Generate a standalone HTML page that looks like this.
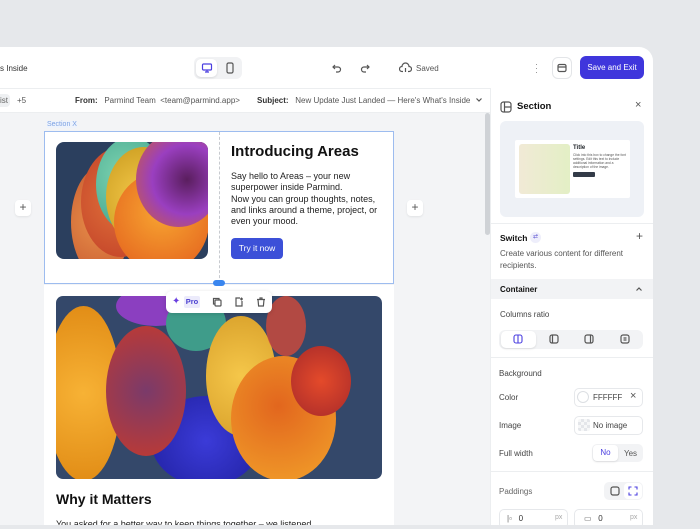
<!DOCTYPE html>
<html><head><style>
*{box-sizing:border-box;margin:0;padding:0}
body{width:700px;height:525px;overflow:hidden;background:#e6e8eb;font-family:"Liberation Sans",sans-serif;position:relative;color:#1f2328}
.a{position:absolute}
.t{font-size:8px;color:#333}
.ic{stroke:#555;fill:none;stroke-width:1.2}
</style></head><body>
<div class="a" style="left:0;top:47px;width:653px;height:478px;background:#fff;border-top-right-radius:14px;overflow:hidden">
 <div class="a t" style="left:0;top:17px;font-size:8px">s Inside</div>
 <div class="a" style="left:194px;top:10px;width:48px;height:22px;background:#f1f2f4;border-radius:6px"></div>
 <div class="a" style="left:196px;top:12px;width:21px;height:18px;background:#fff;border-radius:5px;box-shadow:0 1px 2px rgba(0,0,0,.1)"></div>
 <svg class="a" style="left:201px;top:15px" width="12" height="12" viewBox="0 0 12 12"><rect x="1.5" y="2" width="9" height="6" rx="1" fill="none" stroke="#4b3fe0" stroke-width="1.2"/><path d="M6 8v2M4 10h4" stroke="#4b3fe0" stroke-width="1.2"/></svg>
 <svg class="a" style="left:225px;top:15px" width="10" height="12" viewBox="0 0 10 12"><rect x="2" y="1" width="6" height="10" rx="1.5" class="ic"/></svg>
 <svg class="a" style="left:332px;top:16px" width="10" height="10" viewBox="0 0 10 10"><path d="M3 2L1 4l2 2M1 4h5a2.5 2.5 0 010 5H4" class="ic"/></svg>
 <svg class="a" style="left:360px;top:16px" width="10" height="10" viewBox="0 0 10 10"><path d="M7 2l2 2-2 2M9 4H4a2.5 2.5 0 000 5h2" class="ic"/></svg>
 <svg class="a" style="left:399px;top:15px" width="13" height="12" viewBox="0 0 13 12"><path d="M4 9.5H3a2.5 2.5 0 010-5 3.5 3.5 0 017 0 2.5 2.5 0 010 5H9M6.5 6v4" class="ic"/></svg>
 <div class="a t" style="left:416px;top:17px;color:#555">Saved</div>
 <div class="a" style="left:535px;top:15px;font-size:9px;color:#888;line-height:4px">·<br>·<br>·</div>
 <div class="a" style="left:552px;top:10px;width:20px;height:22px;border:1px solid #e3e5e8;border-radius:6px"></div>
 <svg class="a" style="left:557px;top:16px" width="10" height="10" viewBox="0 0 10 10"><rect x="1" y="1.5" width="8" height="7" rx="1.5" class="ic"/><path d="M1 4h8" class="ic"/></svg>
 <div class="a" style="left:580px;top:9px;width:64px;height:23px;background:#3f36dc;border-radius:6px;color:#fff;font-size:8px;text-align:center;line-height:23px">Save and Exit</div>
 <div class="a" style="left:0;top:41px;width:653px;height:1px;background:#eceef0"></div>
 <div class="a" style="left:0;top:47px;width:10px;height:13px;background:#eef0f2;border-radius:0 4px 4px 0;font-size:8px;color:#666;line-height:13px">ist</div>
 <div class="a t" style="left:17px;top:49px;color:#555">+5</div>
 <div class="a t" style="left:75px;top:49px"><b>From:</b>&nbsp;&nbsp; <span style="color:#555">Parmind Team &nbsp;&lt;team@parmind.app&gt;</span></div>
 <div class="a t" style="left:257px;top:49px"><b>Subject:</b>&nbsp;&nbsp; <span style="color:#555">New Update Just Landed — Here's What's Inside</span></div>
 <svg class="a" style="left:475px;top:50px" width="8" height="6" viewBox="0 0 8 6"><path d="M1.5 1.5L4 4l2.5-2.5" class="ic"/></svg>
 <div class="a" style="left:0;top:65px;width:490px;height:413px;background:#f3f4f6;border-top:1px solid #eceef0"></div>
 <div class="a" style="left:485px;top:66px;width:5px;height:122px;background:#cfd2d6;border-radius:3px"></div>
 <div class="a" style="left:47px;top:74px;font-size:7px;color:#7da2e3;background:#eef3fc">Section X</div>
 <div class="a" style="left:44px;top:84px;width:350px;height:153px;background:#fff;border:1px solid #9dbcef"></div>
 <div class="a" style="left:56px;top:95px;width:152px;height:117px;border-radius:8px;overflow:hidden;background:#2b3f5e">
  <div class="a" style="left:15px;top:25px;width:60px;height:110px;border-radius:50%;background:radial-gradient(circle,#e8904a,#c85a30)"></div>
  <div class="a" style="left:25px;top:5px;width:80px;height:110px;border-radius:50%;background:radial-gradient(circle,#e0713a,#c24128)"></div>
  <div class="a" style="left:40px;top:-5px;width:70px;height:95px;border-radius:50%;background:radial-gradient(circle at 40% 40%,#7dd3b0,#3b9f8a)"></div>
  <div class="a" style="left:50px;top:5px;width:75px;height:100px;border-radius:50%;background:radial-gradient(circle,#f5c94a,#c89a1e)"></div>
  <div class="a" style="left:58px;top:30px;width:95px;height:100px;border-radius:50%;background:radial-gradient(circle at 50% 40%,#f7a531,#e25c1c)"></div>
  <div class="a" style="left:80px;top:-10px;width:85px;height:95px;border-radius:50%;background:radial-gradient(circle at 60% 50%,#5a1e5e,#9a3fc0 50%,#d0622e)"></div>
 </div>
 <div class="a" style="left:219px;top:85px;height:151px;border-left:1px dashed #c7cacf"></div>
 <div class="a" style="left:231px;top:96px;font-size:15px;font-weight:bold;color:#111">Introducing Areas</div>
 <div class="a" style="left:231px;top:124px;font-size:9px;line-height:11.3px;color:#222;width:160px">Say hello to Areas – your new superpower inside Parmind.<br>Now you can group thoughts, notes, and links around a theme, project, or even your mood.</div>
 <div class="a" style="left:231px;top:191px;width:52px;height:21px;background:#3c50d8;border-radius:4px;color:#fff;font-size:8.5px;text-align:center;line-height:21px">Try it now</div>
 <div class="a" style="left:15px;top:153px;width:16px;height:16px;background:#fff;border-radius:4px;box-shadow:0 1px 2px rgba(0,0,0,.08);text-align:center;font-size:12px;line-height:15px;color:#555">+</div>
 <div class="a" style="left:407px;top:153px;width:16px;height:16px;background:#fff;border-radius:4px;box-shadow:0 1px 2px rgba(0,0,0,.08);text-align:center;font-size:12px;line-height:15px;color:#555">+</div>
 <div class="a" style="left:44px;top:238px;width:350px;height:240px;background:#fff"></div>
 <div class="a" style="left:56px;top:249px;width:326px;height:183px;border-radius:7px;overflow:hidden;background:#34486a">
  <div class="a" style="left:-10px;top:10px;width:75px;height:175px;border-radius:50%;background:radial-gradient(circle,#f7b235,#e08a14)"></div>
  <div class="a" style="left:60px;top:-10px;width:80px;height:40px;border-radius:50%;background:#8b3fc0"></div>
  <div class="a" style="left:95px;top:100px;width:110px;height:90px;border-radius:50%;background:radial-gradient(circle,#3b3bd8,#2020a0)"></div>
  <div class="a" style="left:50px;top:30px;width:80px;height:130px;border-radius:50%;background:radial-gradient(circle,#7a3a6a,#c23a30)"></div>
  <div class="a" style="left:110px;top:0;width:60px;height:55px;border-radius:50%;background:#3f9c8a"></div>
  <div class="a" style="left:150px;top:20px;width:70px;height:120px;border-radius:50%;background:radial-gradient(circle,#f5c74a,#d8a02a)"></div>
  <div class="a" style="left:175px;top:60px;width:105px;height:125px;border-radius:50%;background:radial-gradient(circle at 45% 40%,#e2661e,#f2a22a)"></div>
  <div class="a" style="left:235px;top:50px;width:60px;height:70px;border-radius:50%;background:radial-gradient(circle,#e44a2a,#a82a2a)"></div>
  <div class="a" style="left:210px;top:0px;width:40px;height:60px;border-radius:50%;background:#d24a3a;opacity:.8"></div>
 </div>
 <div class="a" style="left:166px;top:244px;width:106px;height:22px;background:#fff;border-radius:6px;box-shadow:0 1px 4px rgba(0,0,0,.15)"></div>
 <div class="a" style="left:172px;top:250px;font-size:10px;color:#6a3fe0;line-height:10px">✦</div>
 <div class="a" style="left:184px;top:249px;width:16px;height:12px;background:#ecebfb;border-radius:2px;font-size:7.5px;font-weight:bold;color:#4a3fd0;text-align:center;line-height:12px">Pro</div>
 <svg class="a" style="left:212px;top:250px" width="10" height="10" viewBox="0 0 10 10"><rect x="3" y="3" width="6" height="6" rx="1" class="ic"/><path d="M7 3V1.5H1.5V7H3" class="ic"/></svg>
 <svg class="a" style="left:234px;top:250px" width="10" height="10" viewBox="0 0 10 10"><path d="M6 1H2v8h6V4M7.5 .5v3M6 2h3" class="ic"/></svg>
 <svg class="a" style="left:256px;top:250px" width="10" height="10" viewBox="0 0 10 10"><path d="M1 2.5h8M4 2.5V1h2v1.5M2 2.5l.6 6.5h4.8l.6-6.5" class="ic"/></svg>
 <div class="a" style="left:213px;top:233px;width:12px;height:6px;background:#3a86ef;border-radius:3px"></div>
 <div class="a" style="left:56px;top:444px;font-size:14px;font-weight:bold;color:#111">Why it Matters</div>
 <div class="a" style="left:56px;top:472px;font-size:9px;color:#222">You asked for a better way to keep things together – we listened.</div>
 <div class="a" style="left:490px;top:41px;width:163px;height:437px;background:#fff;border-left:1px solid #eceef0">
  <svg class="a" style="left:9px;top:13px" width="12" height="12" viewBox="0 0 12 12"><rect x="1" y="1" width="10" height="10" rx="2.5" class="ic" stroke="#333"/><path d="M4.5 1v10M4.5 6H11" class="ic" stroke="#333"/></svg>
  <div class="a" style="left:26px;top:13px;font-size:9.5px;font-weight:bold;color:#111">Section</div>
  <div class="a" style="left:144px;top:11px;font-size:11px;color:#555">×</div>
  <div class="a" style="left:9px;top:33px;width:144px;height:96px;background:#eef1f6;border-radius:6px">
   <div class="a" style="left:15px;top:19px;width:115px;height:58px;background:#fff;border-radius:2px">
    <div class="a" style="left:4px;top:4px;width:51px;height:50px;border-radius:3px;background:linear-gradient(90deg,#f1ead6,#e3efc5)"></div>
    <div class="a" style="left:58px;top:5px;font-size:6px;font-weight:bold">Title</div>
    <div class="a" style="left:58px;top:13px;width:55px;font-size:3.3px;line-height:4px;color:#555">Click into this box to change the font settings. Edit this text to include additional information and a description of the image.</div>
    <div class="a" style="left:58px;top:32px;width:22px;height:5px;background:#333b48;border-radius:1px"></div>
   </div>
  </div>
  <div class="a" style="left:0;top:135px;width:163px;height:1px;background:#eceef0"></div>
  <div class="a" style="left:9px;top:145px;font-size:8.5px;font-weight:bold;color:#111">Switch</div>
  <div class="a" style="left:39px;top:144px;width:11px;height:11px;border-radius:50%;background:#eeeefb;font-size:6px;color:#5a50d0;text-align:center;line-height:11px">⇄</div>
  <div class="a" style="left:145px;top:141px;font-size:12px;color:#555">+</div>
  <div class="a" style="left:9px;top:160px;font-size:8px;line-height:12px;color:#555;width:150px">Create various content for different recipients.</div>
  <div class="a" style="left:0;top:191px;width:163px;height:20px;background:#f2f3f5"></div>
  <div class="a" style="left:9px;top:197px;font-size:8px;font-weight:bold;color:#111">Container</div>
  <svg class="a" style="left:144px;top:198px" width="8" height="6" viewBox="0 0 8 6"><path d="M1.5 4.5L4 2l2.5 2.5" class="ic"/></svg>
  <div class="a t" style="left:9px;top:222px;color:#444">Columns ratio</div>
 </div>
</div>
<div class="a" style="left:499px;top:330px;width:144px;height:19px;background:#f2f3f5;border-radius:6px"></div>
<div class="a" style="left:501px;top:331px;width:35px;height:17px;background:#fff;border-radius:5px;box-shadow:0 1px 2px rgba(0,0,0,.1)"></div>
<svg class="a" style="left:513px;top:334px" width="10" height="10" viewBox="0 0 10 10"><rect x="1" y="1" width="8" height="8" rx="2" fill="none" stroke="#4b3fe0" stroke-width="1.1"/><path d="M5 1v8" stroke="#4b3fe0" stroke-width="1.1"/></svg>
<svg class="a" style="left:549px;top:334px" width="10" height="10" viewBox="0 0 10 10"><rect x="1" y="1" width="8" height="8" rx="2" class="ic"/><path d="M3.5 1v8" class="ic"/></svg>
<svg class="a" style="left:584px;top:334px" width="10" height="10" viewBox="0 0 10 10"><rect x="1" y="1" width="8" height="8" rx="2" class="ic"/><path d="M6.5 1v8" class="ic"/></svg>
<svg class="a" style="left:620px;top:334px" width="10" height="10" viewBox="0 0 10 10"><rect x="1" y="1" width="8" height="8" rx="2" class="ic"/><path d="M3.5 4h3M3.5 6h3" class="ic"/></svg>
<div class="a" style="left:490px;top:357px;width:163px;height:1px;background:#eceef0"></div>
<div class="a t" style="left:499px;top:369px;color:#444">Background</div>
<div class="a t" style="left:499px;top:393px;color:#444">Color</div>
<div class="a" style="left:574px;top:388px;width:69px;height:19px;border:1px solid #e6e8eb;border-radius:5px"></div>
<div class="a" style="left:577px;top:391px;width:12px;height:12px;border:1px solid #dcdfe3;border-radius:50%"></div>
<div class="a t" style="left:593px;top:393px;color:#444">FFFFFF</div>
<div class="a" style="left:630px;top:390px;font-size:11px;color:#555">×</div>
<div class="a t" style="left:499px;top:421px;color:#444">Image</div>
<div class="a" style="left:574px;top:416px;width:69px;height:19px;border:1px solid #e6e8eb;border-radius:5px"></div>
<div class="a" style="left:578px;top:419px;width:12px;height:12px;background:repeating-conic-gradient(#e4e6ea 0 25%,#f6f7f8 0 50%) 0 0/6px 6px;border-radius:2px"></div>
<div class="a t" style="left:593px;top:421px;color:#444">No image</div>
<div class="a t" style="left:499px;top:449px;color:#444">Full width</div>
<div class="a" style="left:592px;top:444px;width:51px;height:18px;background:#f2f3f5;border-radius:5px"></div>
<div class="a" style="left:593px;top:445px;width:25px;height:16px;background:#fff;border-radius:4px;box-shadow:0 1px 2px rgba(0,0,0,.1);font-size:8px;color:#4b3fe0;text-align:center;line-height:16px">No</div>
<div class="a t" style="left:624px;top:449px;color:#555">Yes</div>
<div class="a" style="left:490px;top:471px;width:163px;height:1px;background:#eceef0"></div>
<div class="a t" style="left:499px;top:487px;color:#666">Paddings</div>
<div class="a" style="left:604px;top:482px;width:39px;height:18px;background:#f2f3f5;border-radius:5px"></div>
<div class="a" style="left:624px;top:483px;width:18px;height:16px;background:#fff;border-radius:4px"></div>
<svg class="a" style="left:610px;top:486px" width="10" height="10" viewBox="0 0 10 10"><rect x="1" y="1" width="8" height="8" rx="2" class="ic" stroke="#333"/></svg>
<svg class="a" style="left:628px;top:486px" width="10" height="10" viewBox="0 0 10 10"><path d="M1 3.5V1h2.5M6.5 1H9v2.5M9 6.5V9H6.5M3.5 9H1V6.5" fill="none" stroke="#4b3fe0" stroke-width="1.1"/></svg>
<div class="a" style="left:499px;top:509px;width:69px;height:20px;border:1px solid #e6e8eb;border-radius:5px"></div>
<div class="a" style="left:574px;top:509px;width:69px;height:20px;border:1px solid #e6e8eb;border-radius:5px"></div>
<div class="a t" style="left:507px;top:514px;color:#666">|▫&nbsp;&nbsp; <span style="color:#333">0</span></div>
<div class="a t" style="left:555px;top:514px;color:#aaa;font-size:7px">px</div>
<div class="a t" style="left:584px;top:514px;color:#666">▭&nbsp;&nbsp; <span style="color:#333">0</span></div>
<div class="a t" style="left:630px;top:514px;color:#aaa;font-size:7px">px</div>
</body></html>
